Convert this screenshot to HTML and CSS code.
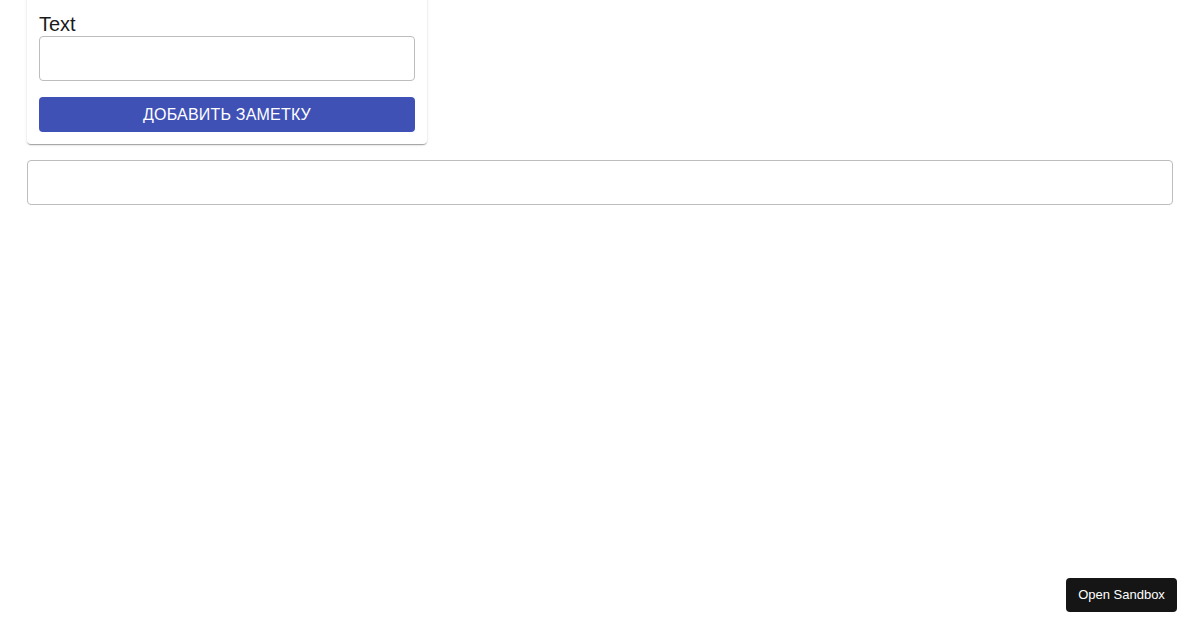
FILE: index.html
```html
<!DOCTYPE html>
<html lang="ru">
<head>
<meta charset="utf-8">
<link rel="stylesheet" href="styles.css">
</head>
<body>
<div class="page">
  <form class="card">
    <label class="label">Text</label>
    <div class="field"></div>
    <button type="button" class="add-btn">Добавить заметку</button>
  </form>
  <div class="field wide"></div>
</div>
<a class="sandbox-btn">Open Sandbox</a>
</body>
</html>
```
FILE: styles.css
```css
* { box-sizing: border-box; }
html, body { margin: 0; padding: 0; background: #fff; }
body {
  font-family: "Liberation Sans", Arial, sans-serif;
  width: 1200px;
  height: 630px;
  overflow: hidden;
  position: relative;
}
.page {
  padding: 0 27px;
  display: flex;
  flex-direction: column;
  gap: 16px;
  margin-top: -10px;
}
.card {
  width: 400px;
  background: #fff;
  border-radius: 4px;
  box-shadow: 0 2px 1px -1px rgba(0,0,0,0.2), 0 1px 1px 0 rgba(0,0,0,0.14), 0 1px 3px 0 rgba(0,0,0,0.12);
  padding: 23px 12px 12px;
  display: flex;
  flex-direction: column;
}
.label {
  font-size: 20px;
  line-height: 23px;
  color: #1a1a1a;
}
.field {
  height: 45px;
  border: 1px solid #bdbdbd;
  border-radius: 4px;
  background: #fff;
}
.add-btn {
  margin-top: 16px;
  height: 35px;
  border: none;
  border-radius: 4px;
  background: #3f51b5;
  color: #fff;
  font-family: "Liberation Sans", Arial, sans-serif;
  font-size: 16px;
  letter-spacing: 0.2px;
  text-transform: uppercase;
  padding: 0;
}
.field.wide { width: 100%; }
.sandbox-btn {
  position: absolute;
  left: 1066px;
  top: 578px;
  width: 111px;
  height: 34px;
  padding-bottom: 1px;
  background: #151515;
  color: #fff;
  border-radius: 4px;
  font-family: "Liberation Sans", Arial, sans-serif;
  font-size: 13px;
  display: flex;
  align-items: center;
  justify-content: center;
}
```
